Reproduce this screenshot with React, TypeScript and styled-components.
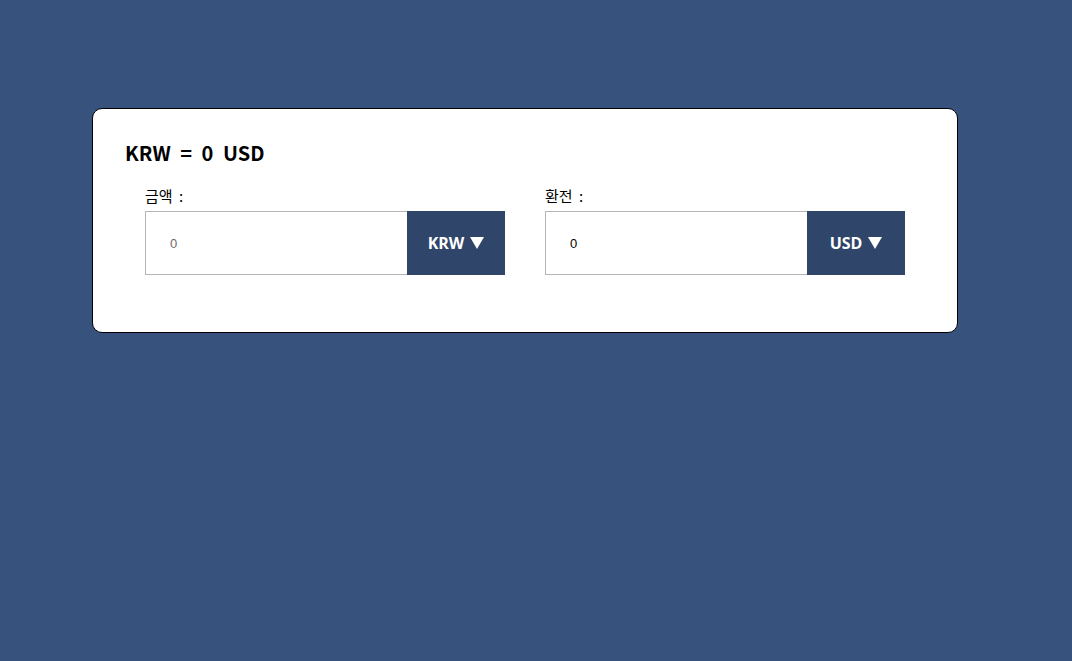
import React, { useState } from "react";
import styled, { createGlobalStyle } from "styled-components";

const GlobalStyle = createGlobalStyle`
  html, body {
    margin: 0;
    padding: 0;
    background: #37527d;
    font-family: "Noto Sans CJK KR", "Noto Sans", sans-serif;
  }
`;

const Page = styled.div`
  min-height: 661px;
  padding: 108px 0 0 92px;
  box-sizing: border-box;
`;

const Card = styled.div`
  width: 866px;
  height: 225px;
  box-sizing: border-box;
  background: #fff;
  border: 1px solid #000;
  border-radius: 10px;
  padding: 30px 32px 0 32px;
`;

const Title = styled.h2`
  margin: 0;
  font-size: 20px;
  font-weight: 700;
  line-height: 28px;
  word-spacing: 5px;
  color: #000;
`;

const Row = styled.div`
  display: flex;
  gap: 40px;
  padding-left: 20px;
  margin-top: 19px;
`;

const Group = styled.div`
  display: flex;
  flex-direction: column;
`;

const Label = styled.label`
  font-size: 15px;
  line-height: 20px;
  word-spacing: 3px;
  color: #000;
  margin-bottom: 5px;
`;

const Field = styled.div`
  display: flex;
  height: 64px;
`;

const Input = styled.input<{ $dim?: boolean }>`
  width: 262px;
  height: 64px;
  box-sizing: border-box;
  border: 1px solid #b5b5b5;
  border-right: none;
  padding: 0 0 0 24px;
  font-family: "Liberation Sans", Arial, sans-serif;
  font-size: 13px;
  color: ${(p) => (p.$dim ? "#6b6b6b" : "#000")};
  outline: none;
`;

const Select = styled.button`
  width: 98px;
  height: 64px;
  border: none;
  background: #2f4569;
  color: #fff;
  font-family: "Open Sans", "Noto Sans", sans-serif;
  font-size: 16px;
  font-weight: 700;
  display: flex;
  align-items: center;
  justify-content: center;
  gap: 6px;
  cursor: pointer;
`;

const Caret = () => (
  <svg width="14" height="12" viewBox="0 0 14 12">
    <polygon points="0,0 14,0 7,12" fill="#fff" />
  </svg>
);

export default function App() {
  const [amount, setAmount] = useState("0");
  const [result] = useState("0");

  return (
    <Page>
      <GlobalStyle />
      <Card>
        <Title>KRW = {result} USD</Title>
        <Row>
          <Group>
            <Label>금액 :</Label>
            <Field>
              <Input $dim value={amount} onChange={(e) => setAmount(e.target.value)} />
              <Select>
                KRW <Caret />
              </Select>
            </Field>
          </Group>
          <Group>
            <Label>환전 :</Label>
            <Field>
              <Input value={result} readOnly />
              <Select>
                USD <Caret />
              </Select>
            </Field>
          </Group>
        </Row>
      </Card>
    </Page>
  );
}
